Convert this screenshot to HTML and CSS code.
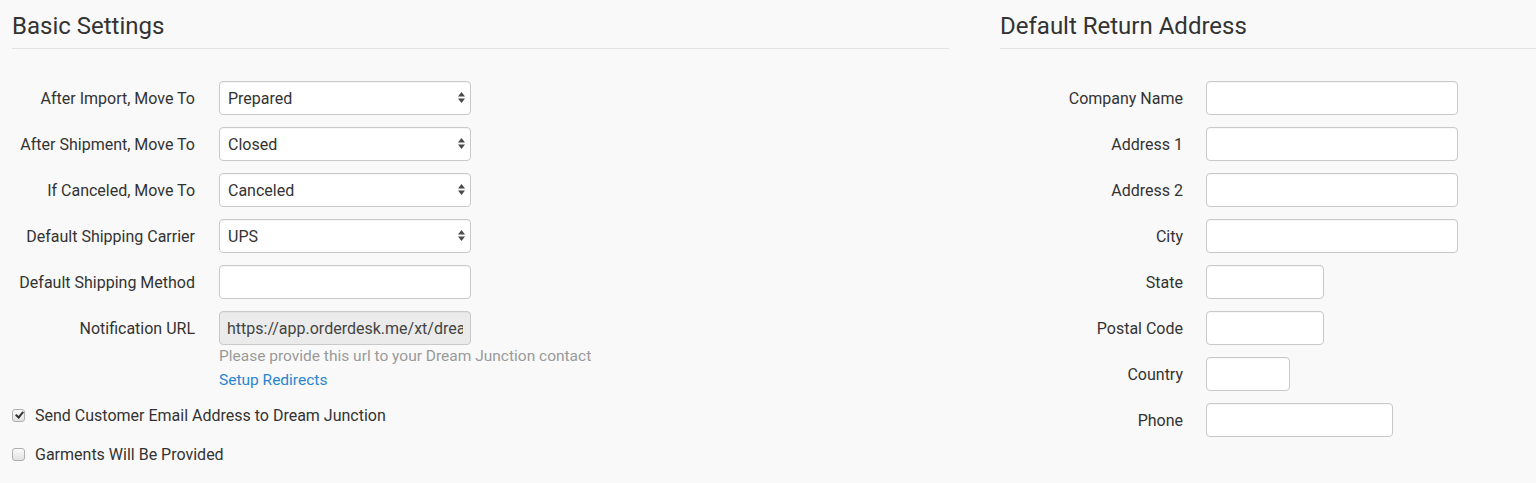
FILE: index.html
```html
<!DOCTYPE html>
<html>
<head>
  <meta charset='utf-8'>
  <title>Settings</title>
  <meta name='viewport' content='width=device-width, initial-scale=1'>
  <link rel="stylesheet" href="styles.css">
</head>
<body>

  <div class="page">

    <!-- 왼쪽: 기본 설정 -->
    <section class="panel basic">
      <h2>Basic Settings</h2>

      <div class="rows">
        <label class="label">After Import, Move To</label>
        <div class="select-wrap">
          <select class="field">
            <option>Prepared</option>
          </select>
          <svg class="arrows" width="9" height="13" viewBox="0 0 9 13"><path d="M4.5 1 L8 5.5 H1 Z M4.5 12 L8 7.5 H1 Z" fill="#4a4a4a"/></svg>
        </div>

        <label class="label">After Shipment, Move To</label>
        <div class="select-wrap">
          <select class="field">
            <option>Closed</option>
          </select>
          <svg class="arrows" width="9" height="13" viewBox="0 0 9 13"><path d="M4.5 1 L8 5.5 H1 Z M4.5 12 L8 7.5 H1 Z" fill="#4a4a4a"/></svg>
        </div>

        <label class="label">If Canceled, Move To</label>
        <div class="select-wrap">
          <select class="field">
            <option>Canceled</option>
          </select>
          <svg class="arrows" width="9" height="13" viewBox="0 0 9 13"><path d="M4.5 1 L8 5.5 H1 Z M4.5 12 L8 7.5 H1 Z" fill="#4a4a4a"/></svg>
        </div>

        <label class="label">Default Shipping Carrier</label>
        <div class="select-wrap">
          <select class="field">
            <option>UPS</option>
          </select>
          <svg class="arrows" width="9" height="13" viewBox="0 0 9 13"><path d="M4.5 1 L8 5.5 H1 Z M4.5 12 L8 7.5 H1 Z" fill="#4a4a4a"/></svg>
        </div>

        <label class="label">Default Shipping Method</label>
        <input class="field" type="text">

        <label class="label">Notification URL</label>
        <div class="url-box">
          <input class="field readonly" type="text" value="https://app.orderdesk.me/xt/dreamjunction" readonly>
          <p class="help">Please provide this url to your Dream Junction contact</p>
          <a class="link" href="#">Setup Redirects</a>
        </div>
      </div>

      <label class="check">
        <input type="checkbox" checked>
        <span>Send Customer Email Address to Dream Junction</span>
      </label>
      <label class="check">
        <input type="checkbox">
        <span>Garments Will Be Provided</span>
      </label>
    </section>

    <!-- 오른쪽: 반송 주소 -->
    <section class="panel address">
      <h2>Default Return Address</h2>

      <div class="rows">
        <label class="label">Company Name</label>
        <input class="field" type="text">

        <label class="label">Address 1</label>
        <input class="field" type="text">

        <label class="label">Address 2</label>
        <input class="field" type="text">

        <label class="label">City</label>
        <input class="field" type="text">

        <label class="label">State</label>
        <input class="field small" type="text">

        <label class="label">Postal Code</label>
        <input class="field small" type="text">

        <label class="label">Country</label>
        <input class="field tiny" type="text">

        <label class="label">Phone</label>
        <input class="field medium" type="text">
      </div>
    </section>

  </div>

</body>
</html>
```

FILE: styles.css
```css
body {
  margin: 0;
  background: #f9f9f9;
  color: #333;
  font-family: Roboto, "Liberation Sans", sans-serif;
  font-size: 16px;
}

.page {
  display: grid;
  grid-template-columns: 937px 1fr;
  column-gap: 51px;
  padding-left: 12px;
}

.panel h2 {
  margin: 0 0 32px;
  padding: 14px 0 10px;
  font-size: 24px;
  font-weight: 400;
  line-height: 24px;
  color: #333;
  border-bottom: 1px solid #e3e3e3;
}

.rows {
  display: grid;
  grid-template-columns: 183px 252px;
  column-gap: 24px;
  row-gap: 12px;
  align-items: start;
}

.address .rows {
  column-gap: 23px;
}

.label {
  height: 34px;
  line-height: 36px;
  text-align: right;
  white-space: nowrap;
}

.field {
  display: block;
  width: 100%;
  height: 34px;
  margin: 0;
  padding: 0 8px;
  box-sizing: border-box;
  font-family: inherit;
  font-size: 16px;
  color: #333;
  background: #fff;
  border: 1px solid #c9c9c9;
  border-radius: 4px;
  box-shadow: inset 0 1px 1px rgba(0, 0, 0, 0.04);
  outline: none;
}

.field.readonly {
  padding: 0 7px;
  background: #ebebeb;
  color: #444;
}

.field.small {
  width: 118px;
}
.field.tiny {
  width: 84px;
}
.field.medium {
  width: 187px;
}

.select-wrap {
  position: relative;
}
.select-wrap select {
  appearance: none;
  -webkit-appearance: none;
}
.arrows {
  position: absolute;
  right: 5px;
  top: 10px;
  pointer-events: none;
}

.help {
  margin: 2px 0 0;
  line-height: 18px;
  font-size: 15.5px;
  color: #999;
  white-space: nowrap;
}

.link {
  display: block;
  margin-top: 6px;
  line-height: 18px;
  font-size: 15.5px;
  color: #2a85d0;
  text-decoration: none;
}

.check {
  display: flex;
  align-items: center;
  gap: 10px;
  height: 20px;
}
.rows + .check {
  margin-top: 16px;
}
.check + .check {
  margin-top: 19px;
}
.check input {
  position: relative;
  appearance: none;
  -webkit-appearance: none;
  width: 13px;
  height: 13px;
  margin: 0;
  background: linear-gradient(#fafafa, #e2e2e2);
  border: 1px solid #b0b0b0;
  border-radius: 3px;
}
.check input:checked::after {
  content: "";
  position: absolute;
  left: 3.5px;
  top: 0.5px;
  width: 3px;
  height: 6px;
  border: solid #333;
  border-width: 0 2px 2px 0;
  transform: rotate(40deg);
}
```
